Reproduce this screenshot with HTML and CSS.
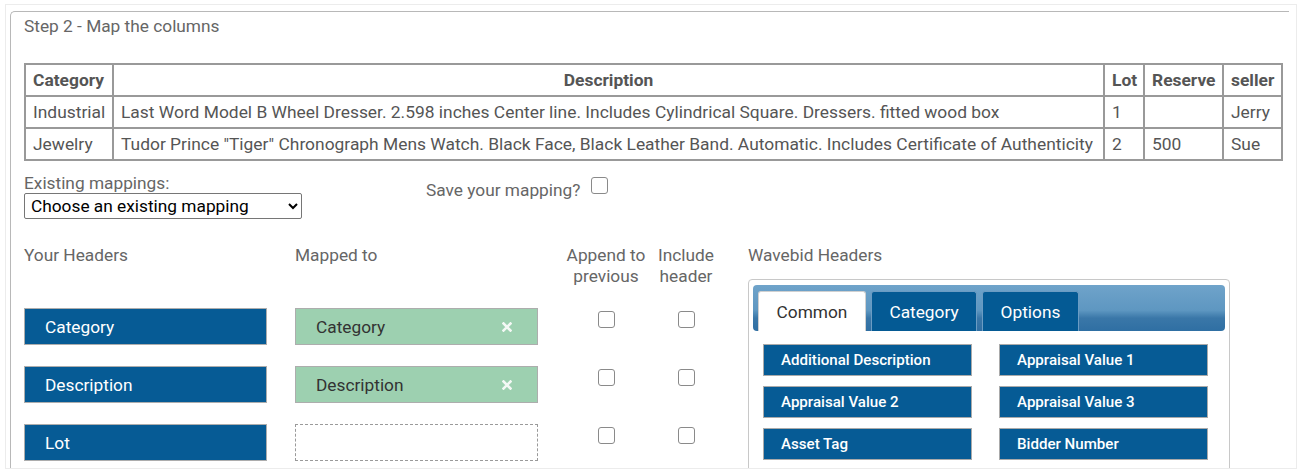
FILE: index.html
```html
<!DOCTYPE html>
<html lang="en">
<head>
<meta charset="utf-8">
<title>Step 2 - Map the columns</title>
<link rel="stylesheet" href="styles.css">
</head>
<body>
<div class="frame">
  <section class="step">
    <h2 class="step-title">Step 2 - Map the columns</h2>

    <table class="preview">
      <colgroup>
        <col class="c-cat"><col class="c-desc"><col class="c-lot"><col class="c-res"><col class="c-sel">
      </colgroup>
      <thead>
        <tr><th>Category</th><th class="center">Description</th><th>Lot</th><th>Reserve</th><th>seller</th></tr>
      </thead>
      <tbody>
        <tr><td>Industrial</td><td>Last Word Model B Wheel Dresser. 2.598 inches Center line. Includes Cylindrical Square. Dressers. fitted wood box</td><td>1</td><td></td><td>Jerry</td></tr>
        <tr><td>Jewelry</td><td>Tudor Prince "Tiger" Chronograph Mens Watch. Black Face, Black Leather Band. Automatic. Includes Certificate of Authenticity</td><td>2</td><td>500</td><td>Sue</td></tr>
      </tbody>
    </table>

    <div class="options">
      <div class="existing">
        <label class="lbl" for="mapsel">Existing mappings:</label>
        <select id="mapsel" class="mapsel"><option>Choose an existing mapping</option></select>
      </div>
      <label class="save">Save your mapping? <input type="checkbox" class="cb"></label>
    </div>

    <div class="mapping">
      <div class="map-left">
        <div class="hdr">Your Headers</div>
        <div class="hdr">Mapped to</div>
        <div class="hdr center">Append to<br>previous</div>
        <div class="hdr center">Include<br>header</div>

        <div class="src">Category</div>
        <div class="dst filled">Category <span class="x"><svg width="10" height="10" viewBox="0 0 10 10"><path d="M1.5 1.5 L8.5 8.5 M8.5 1.5 L1.5 8.5" stroke="#f4f8f5" stroke-width="2.6" stroke-linecap="square"/></svg></span></div>
        <div class="cbcell"><input type="checkbox" class="cb"></div>
        <div class="cbcell"><input type="checkbox" class="cb"></div>

        <div class="src">Description</div>
        <div class="dst filled">Description <span class="x"><svg width="10" height="10" viewBox="0 0 10 10"><path d="M1.5 1.5 L8.5 8.5 M8.5 1.5 L1.5 8.5" stroke="#f4f8f5" stroke-width="2.6" stroke-linecap="square"/></svg></span></div>
        <div class="cbcell"><input type="checkbox" class="cb"></div>
        <div class="cbcell"><input type="checkbox" class="cb"></div>

        <div class="src">Lot</div>
        <div class="dst empty"></div>
        <div class="cbcell"><input type="checkbox" class="cb"></div>
        <div class="cbcell"><input type="checkbox" class="cb"></div>
      </div>

      <div class="wavebid">
        <div class="hdr">Wavebid Headers</div>
        <div class="panel">
          <div class="tabbar">
            <div class="tab active">Common</div>
            <div class="tab">Category</div>
            <div class="tab">Options</div>
          </div>
          <div class="wb-grid">
            <div class="wb">Additional Description</div>
            <div class="wb">Appraisal Value 1</div>
            <div class="wb">Appraisal Value 2</div>
            <div class="wb">Appraisal Value 3</div>
            <div class="wb">Asset Tag</div>
            <div class="wb">Bidder Number</div>
          </div>
        </div>
      </div>
    </div>
  </section>
</div>
</body>
</html>
```

FILE: styles.css
```css
html, body {
  margin: 0;
  padding: 0;
  background: #fff;
}
body {
  font-family: Roboto, "Liberation Sans", Arial, sans-serif;
  font-size: 17.3px;
  color: #666;
  height: 475px;
  overflow: hidden;
}
.frame {
  margin: 4px 0 0 5px;
  width: 1290px;
  height: 463px;
  border: 1px solid #ececec;
  overflow: hidden;
}
.step {
  margin: 6px 0 0 4px;
  width: 1259px;
  padding: 0 6px 0 13px;
  border-top: 1px solid #b8b8b8;
  border-left: 1px solid #b8b8b8;
  border-top-left-radius: 5px;
  min-height: 600px;
}
.step-title {
  margin: 0;
  padding-top: 4px;
  font-size: 17.3px;
  font-weight: 400;
  line-height: 20px;
  color: #666;
}
.preview {
  margin-top: 27px;
  width: 1259px;
  table-layout: fixed;
  border-collapse: collapse;
  border: 2px solid #999;
  color: #555;
}
.c-cat { width: 88px; }
.c-desc { width: 991px; }
.c-lot { width: 40px; }
.c-res { width: 79px; }
.c-sel { width: 59px; }
.preview th, .preview td {
  border: 2px solid #999;
  height: 32px;
  padding: 0 0 0 7px;
  text-align: left;
  white-space: nowrap;
  overflow: hidden;
  font-size: 17.4px;
  line-height: 20px;
  box-sizing: border-box;
}
.preview th { font-weight: 700; }
.preview th.center { text-align: center; padding: 0; }

.options {
  display: flex;
  margin-top: 12px;
}
.existing {
  display: flex;
  flex-direction: column;
  width: 278px;
}
.lbl {
  line-height: 20px;
  color: #666;
}
.mapsel {
  width: 278px;
  height: 26px;
  font-family: Roboto, "Liberation Sans", Arial, sans-serif;
  font-size: 17.3px;
  color: #000;
  background: #fff;
  border: 1px solid #767676;
  border-radius: 2px;
  padding: 0 2px;
}
.save {
  display: flex;
  align-items: flex-start;
  margin: 7px 0 0 124px;
  line-height: 21px;
  color: #666;
}
.cb {
  appearance: none;
  -webkit-appearance: none;
  width: 16px;
  height: 16px;
  margin: 0;
  border: 1px solid #8a8a8a;
  border-radius: 3px;
  background: #fff;
  box-sizing: border-box;
}
.save .cb { margin: -3px 0 0 11px; width: 17px; height: 17px; }

.mapping {
  display: flex;
  align-items: flex-start;
  margin-top: 26px;
}
.map-left {
  display: grid;
  grid-template-columns: 271px 271px 80px 80px;
  grid-auto-rows: 37px;
  grid-template-rows: 42px;
  row-gap: 21px;
}
.hdr {
  line-height: 21px;
  color: #666;
}
.hdr.center { text-align: center; }
.src, .dst {
  width: 243px;
  height: 37px;
  box-sizing: border-box;
  border: 1px solid #adadad;
  display: flex;
  align-items: center;
  padding-left: 20px;
  line-height: 20px;
}
.src {
  background: #065b95;
  color: #fff;
}
.dst.filled {
  background: #9dd0b0;
  color: #333;
  justify-content: space-between;
  padding-right: 25px;
}
.x { display: flex; }
.dst.empty {
  border: 1px dashed #9a9a9a;
  background: #fff;
}
.cbcell {
  display: flex;
  justify-content: center;
  padding-top: 3px;
}
.cbcell .cb { width: 17px; height: 17px; }
.wavebid {
  margin-left: 22px;
  width: 482px;
}
.panel {
  margin-top: 13px;
  border: 1px solid #c8c8c8;
  border-radius: 4px;
  padding: 5px 4px;
  height: 300px;
}
.tabbar {
  height: 46px;
  box-sizing: border-box;
  border-radius: 4px;
  padding: 6px 0 0 5px;
  display: flex;
  gap: 5px;
  background: linear-gradient(#6fa3ca 0%, #5e97c1 55%, #3a77a8 72%, #2f6fa3 100%);
}
.tab {
  height: 40px;
  box-sizing: border-box;
  padding: 0;
  display: flex;
  align-items: center;
  justify-content: center;
  background: #045a94;
  color: #fff;
  border: 1px solid #6b9cc3;
  border-bottom: none;
  border-radius: 3px 3px 0 0;
}
.tab.active {
  background: #fff;
  color: #333;
  border-color: #d0d0d0;
}
.tab:nth-child(1) { width: 108px; }
.tab:nth-child(2) { width: 106px; }
.tab:nth-child(3) { width: 97px; }
.wb-grid {
  display: grid;
  grid-template-columns: 209px 209px;
  column-gap: 27px;
  row-gap: 10px;
  padding: 13px 0 0 10px;
}
.wb {
  height: 32px;
  box-sizing: border-box;
  border: 1px solid #aaa;
  background: #065b95;
  color: #fff;
  font-size: 15.1px;
  font-weight: 500;
  display: flex;
  align-items: center;
  padding-left: 17px;
}
```
